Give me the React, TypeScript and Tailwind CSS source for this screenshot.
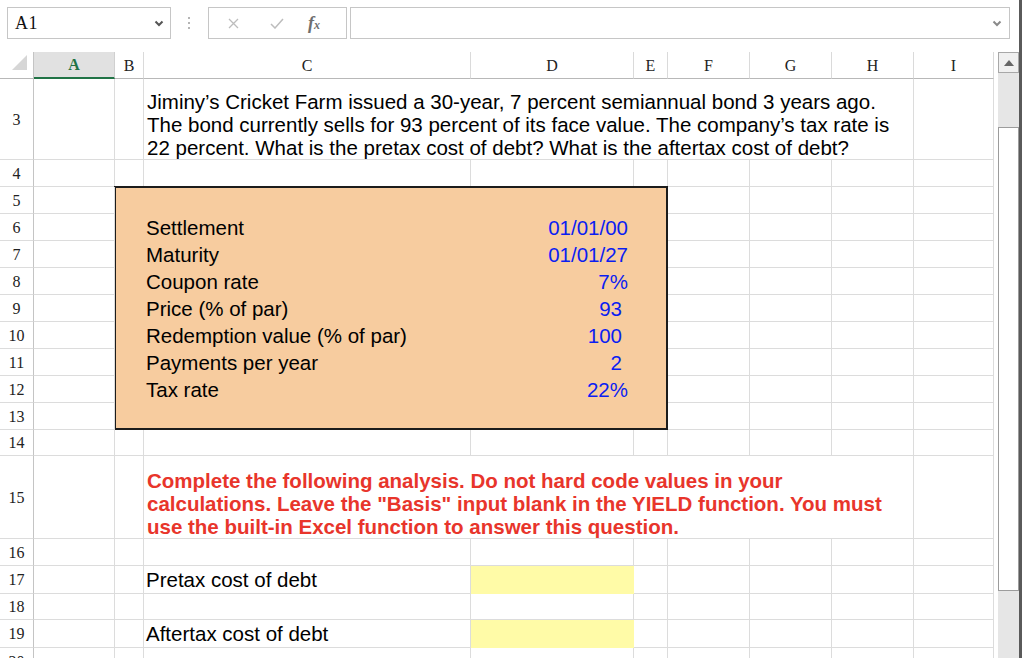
import { ReactNode } from "react";

const cell = "border-r border-b border-[#dcdcdc]";
const cols = ["A", "B", "C", "D", "E", "F", "G", "H", "I"];

const RowHead = ({ n }: { n: number }) => (
    <div className="flex items-center justify-center border-r border-b border-r-[#c4c4c4] border-b-[#dcdcdc] font-['Liberation_Serif',serif] text-[16px] text-[#222]">
        {n}
    </div>
);

const Empty = ({ count }: { count: number }) => (
    <>
        {Array.from({ length: count }).map((_, i) => (
            <div key={i} className={cell} />
        ))}
    </>
);

const Chevron = ({ color }: { color: string }) => (
    <svg width="10" height="7" viewBox="0 0 10 7">
        <polyline points="1.5,1.5 5,5 8.5,1.5" fill="none" stroke={color} strokeWidth="2" />
    </svg>
);

const bond: { label: string; value: string; pct?: boolean }[] = [
    { label: "Settlement", value: "01/01/00", pct: true },
    { label: "Maturity", value: "01/01/27", pct: true },
    { label: "Coupon rate", value: "7%", pct: true },
    { label: "Price (% of par)", value: "93" },
    { label: "Redemption value (% of par)", value: "100" },
    { label: "Payments per year", value: "2" },
    { label: "Tax rate", value: "22%", pct: true },
];

const LabelRow = ({ n, label }: { n: number; label: ReactNode }) => (
    <>
        <RowHead n={n} />
        <Empty count={2} />
        <div className={`${cell} flex items-center pl-[2px]`}>{label}</div>
        <div className="border-r border-b border-[#fffba7] bg-[#fffba7]" />
        <Empty count={5} />
    </>
);

const App = () => {
    return (
        <div className="flex h-[672px] w-[1024px] overflow-hidden bg-white font-['Liberation_Sans',Arial,sans-serif] text-black">
            <div className="flex w-[1019px] flex-col">
                {/* name box + formula bar */}
                <div className="flex h-[52px] items-start pt-[7px] pl-[7px]">
                    <div className="flex h-[32px] w-[164px] items-center justify-between border border-[#c6c6c6] pl-[7px] pr-[6px]">
                        <span className="font-['Liberation_Serif',serif] text-[18px] tracking-[0.5px] text-[#111]">A1</span>
                        <Chevron color="#555" />
                    </div>
                    <div className="ml-[16px] mt-[10px] flex w-[3px] flex-col items-center gap-[3px]">
                        <span className="h-[2px] w-[2px] bg-[#b5b5b5]" />
                        <span className="h-[2px] w-[2px] bg-[#b5b5b5]" />
                        <span className="h-[2px] w-[2px] bg-[#b5b5b5]" />
                    </div>
                    <div className="ml-[18px] flex h-[32px] w-[139px] items-center border border-[#c6c6c6]">
                        <svg className="ml-[19px]" width="11" height="11" viewBox="0 0 11 11">
                            <path d="M1 1L10 10M10 1L1 10" stroke="#bdbdbd" strokeWidth="1.3" />
                        </svg>
                        <svg className="ml-[31px]" width="14" height="11" viewBox="0 0 14 11">
                            <path d="M1 6L5 10L13 1" fill="none" stroke="#bdbdbd" strokeWidth="1.5" />
                        </svg>
                        <span className="ml-[24px] font-['Liberation_Serif',serif] text-[18px] font-bold italic leading-none text-[#6f6f6f]">
                            f<span className="text-[12px]">x</span>
                        </span>
                    </div>
                    <div className="ml-[3px] flex h-[32px] w-[660px] items-center justify-end border border-[#c6c6c6] pr-[7px]">
                        <Chevron color="#8a8a8a" />
                    </div>
                </div>

                <div className="flex h-[606px]">
                    <div className="grid h-[606px] w-[994px] grid-cols-[34px_81px_29px_327px_163px_34px_82px_82px_82px_80px] grid-rows-[27px_81px_27px_27px_27px_27px_27px_27px_27px_27px_27px_27px_26px_83px_27px_28px_26px_28px_27px] overflow-hidden text-[20.5px] leading-[23px]">
                        {/* column headers */}
                        <div className="flex items-end justify-end border-r border-b border-r-[#c4c4c4] border-b-[#b8b8b8] pr-[6px] pb-[8px]">
                            <svg width="15" height="15" viewBox="0 0 15 15">
                                <polygon points="15,0 15,15 0,15" fill="#d6d6d6" />
                            </svg>
                        </div>
                        {cols.map((c) =>
                            c === "A" ? (
                                <div key={c} className="flex items-center justify-center border-r border-b-2 border-r-[#d0d0d0] border-b-[#217346] bg-[#e1e1e1] font-['Liberation_Serif',serif] text-[16px] font-bold text-[#217346]">
                                    {c}
                                </div>
                            ) : (
                                <div key={c} className="flex items-center justify-center border-r border-b border-r-[#dadada] border-b-[#b8b8b8] font-['Liberation_Serif',serif] text-[16px] text-[#222]">
                                    {c}
                                </div>
                            )
                        )}

                        {/* row 3 */}
                        <RowHead n={3} />
                        <Empty count={2} />
                        <div className={`${cell} col-start-4 col-span-6 row-start-2 flex flex-col justify-end pl-[3px]`}>
                            <span className="whitespace-nowrap">Jiminy’s Cricket Farm issued a 30-year, 7 percent semiannual bond 3 years ago.</span>
                            <span className="whitespace-nowrap">The bond currently sells for 93 percent of its face value. The company’s tax rate is</span>
                            <span className="whitespace-nowrap">22 percent. What is the pretax cost of debt? What is the aftertax cost of debt?</span>
                        </div>
                        <Empty count={1} />

                        <RowHead n={4} />
                        <Empty count={9} />

                        {/* bond inputs box, B5:E13 */}
                        <div className="col-start-3 col-span-4 row-start-4 row-span-9 -mt-px -ml-px border-2 border-[#1c1c1c] bg-[#f7cc9f]">
                            <div className="h-[26px]" />
                            {bond.map((b) => (
                                <div key={b.label} className="grid h-[27px] grid-cols-[28px_327px_163px] items-center">
                                    <div />
                                    <div className="pl-[2px]">{b.label}</div>
                                    <div className={`text-right text-[#0b1ef2] ${b.pct ? "pr-[6px]" : "pr-[12px]"}`}>{b.value}</div>
                                </div>
                            ))}
                        </div>
                        {[5, 6, 7, 8, 9, 10, 11, 12, 13].map((n) => (
                            <div key={n} className="contents">
                                <RowHead n={n} />
                                <Empty count={5} />
                            </div>
                        ))}

                        <RowHead n={14} />
                        <Empty count={9} />

                        {/* row 15 instructions */}
                        <RowHead n={15} />
                        <Empty count={2} />
                        <div className={`${cell} col-start-4 col-span-6 row-start-14 flex flex-col justify-end pl-[3px] font-bold text-[#e8352b]`}>
                            <span className="whitespace-nowrap">Complete the following analysis. Do not hard code values in your</span>
                            <span className="whitespace-nowrap">calculations. Leave the "Basis" input blank in the YIELD function. You must</span>
                            <span className="whitespace-nowrap">use the built-in Excel function to answer this question.</span>
                        </div>
                        <Empty count={1} />

                        <RowHead n={16} />
                        <Empty count={9} />
                        <LabelRow n={17} label="Pretax cost of debt" />
                        <RowHead n={18} />
                        <Empty count={9} />
                        <LabelRow n={19} label="Aftertax cost of debt" />
                        <RowHead n={20} />
                        <Empty count={9} />
                    </div>

                    <div className="w-[4px]" />

                    {/* vertical scrollbar */}
                    <div className="flex w-[21px] flex-col">
                        <div className="flex h-[21px] items-center justify-center border border-[#a8a8a8] bg-[#f0f0f0]">
                            <svg width="10" height="6" viewBox="0 0 10 6">
                                <polygon points="5,0 10,6 0,6" fill="#666" />
                            </svg>
                        </div>
                        <div className="h-[54px] bg-[#e6e6e6]" />
                        <div className="h-[464px] border border-[#9c9c9c] bg-white" />
                        <div className="flex-1 bg-[#e6e6e6]" />
                    </div>
                </div>
            </div>
            <div className="h-[658px] w-[3px] bg-[#5a5a5a]" />
        </div>
    );
};

export default App;
